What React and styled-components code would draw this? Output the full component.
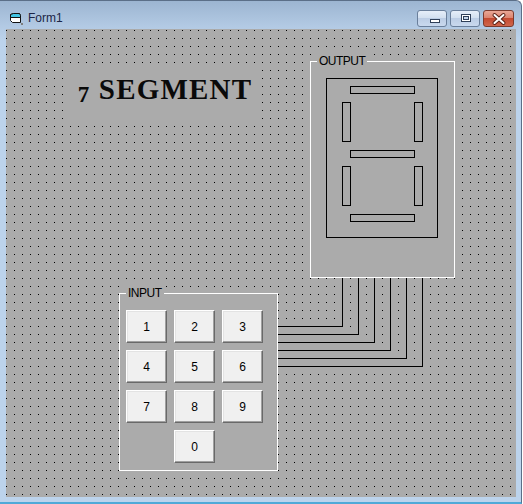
import React from 'react';
import styled, { createGlobalStyle, css } from 'styled-components';

const FORM_GRAY = '#ababab';

const GlobalStyle = createGlobalStyle`
    html, body {
        margin: 0;
        padding: 0;
        background: #ffffff;
    }
    body {
        font-family: "Liberation Sans", Arial, sans-serif;
    }
`;

// segments of the display, relative to the outer box (px)
const SEGMENTS = [
    { x: 24, y: 8, w: 64, h: 7 },
    { x: 16, y: 24, w: 8, h: 39 },
    { x: 88, y: 24, w: 8, h: 39 },
    { x: 24, y: 72, w: 64, h: 7 },
    { x: 16, y: 88, w: 8, h: 39 },
    { x: 88, y: 88, w: 8, h: 39 },
    { x: 24, y: 136, w: 64, h: 7 },
];

const KEYS = ['1', '2', '3', '4', '5', '6', '7', '8', '9', '0'];

const WIRES = [0, 1, 2, 3, 4, 5];

function App() {
    return (
        <>
            <GlobalStyle />
            <Window>
                <TitleBar>
                    <FormIcon width="14" height="13" viewBox="0 0 14 13">
                        <path d="M1.5 2.5 L4.5 1.5 L10.5 1.5 L11.5 3.5 L11.5 10.5 L3.5 10.5 L1.5 8.5 Z" fill="#ffffff" stroke="#111111" />
                        <path d="M1.5 2.5 L4.5 1.5 L10.5 1.5 L11.5 3.5 L11.5 5.5 L1.5 5.5 Z" fill="#41c4e4" stroke="#111111" />
                        <rect x="12" y="11" width="2" height="2" fill="#7f7f7f" />
                    </FormIcon>
                    <Title>Form1</Title>
                    <CaptionButtons>
                        <CaptionButton $w={30}>
                            <svg width="28" height="15" viewBox="0 0 28 15">
                                <rect x="12.5" y="8.5" width="9" height="3" fill="#ffffff" stroke="#2f3f58" />
                            </svg>
                        </CaptionButton>
                        <CaptionButton $w={30}>
                            <svg width="28" height="15" viewBox="0 0 28 15">
                                <rect x="10.5" y="3.5" width="9" height="7" fill="#ffffff" stroke="#2f3f58" />
                                <rect x="12.5" y="5.5" width="5" height="3" fill="#c5d5ea" stroke="#2f3f58" />
                            </svg>
                        </CaptionButton>
                        <CaptionButton $w={31} $close>
                            <svg width="29" height="15" viewBox="0 0 29 15">
                                <path d="M10.5 4 L19.5 12 M19.5 4 L10.5 12" stroke="#5a2217" strokeWidth="4" strokeLinecap="round" />
                                <path d="M10.5 4 L19.5 12 M19.5 4 L10.5 12" stroke="#ffffff" strokeWidth="2" strokeLinecap="round" />
                            </svg>
                        </CaptionButton>
                    </CaptionButtons>
                </TitleBar>

                <Client>
                    <TopRow>
                        <Heading>
                            <Seven>7</Seven> SEGMENT
                        </Heading>
                        <OutputFrame>
                            <Caption>OUTPUT</Caption>
                            <svg width="112" height="160" viewBox="0 0 112 160" style={{ display: 'block' }}>
                                <rect x="0.5" y="0.5" width="111" height="159" fill="none" stroke="#000" />
                                {SEGMENTS.map((s, i) => (
                                    <rect key={i} x={s.x + 0.5} y={s.y + 0.5} width={s.w} height={s.h} fill="none" stroke="#000" />
                                ))}
                            </svg>
                        </OutputFrame>
                    </TopRow>

                    <BottomRow>
                        <InputFrame>
                            <Caption>INPUT</Caption>
                            {KEYS.map((k) => (
                                <Key key={k} $zero={k === '0'}>{k}</Key>
                            ))}
                        </InputFrame>
                        <Wires width="145" height="89" viewBox="0 0 145 89">
                            {WIRES.map((i) => (
                                <polyline
                                    key={i}
                                    points={`0,${48.5 + 8 * i} ${64.5 + 16 * i},${48.5 + 8 * i} ${64.5 + 16 * i},0`}
                                    fill="none"
                                    stroke="#000"
                                />
                            ))}
                        </Wires>
                    </BottomRow>
                </Client>
            </Window>
        </>
    );
}

const Window = styled.div`
    width: 522px;
    height: 504px;
    box-sizing: border-box;
    border-top: 1px solid #5b6f88;
    border-right: 1px solid #5b6f88;
    border-bottom: 2px solid #4fa9d8;
    border-top-right-radius: 6px;
    background: linear-gradient(180deg, #9cb5d1 0px, #b3cae4 26px, #bcd3ec 40px, #bcd3ec 100%);
    display: flex;
    flex-direction: column;
`;

const TitleBar = styled.div`
    height: 28px;
    display: flex;
    align-items: flex-start;
    padding: 0 7px 0 9px;
`;

const FormIcon = styled.svg`
    display: block;
    margin-top: 11px;
`;

const Title = styled.span`
    margin: 10px 0 0 5px;
    font-size: 12px;
    line-height: 14px;
    color: #1b2546;
`;

const CaptionButtons = styled.div`
    margin: 9px 0 0 auto;
    display: flex;
    gap: 3px;
`;

const CaptionButton = styled.div`
    width: ${(p) => p.$w}px;
    height: 17px;
    box-sizing: border-box;
    border: 1px solid #6a7f9b;
    border-radius: 3px;
    background: linear-gradient(180deg, #e6eef9 0%, #d3e0f0 45%, #bccde5 50%, #c9d9ee 100%);
    svg {
        display: block;
    }
    ${(p) => p.$close && css`
        border-color: #7b3a2d;
        background: linear-gradient(180deg, #e9a796 0%, #dc8470 45%, #c44a31 50%, #d0664c 100%);
    `}
`;

const Client = styled.div`
    margin: 0 5px 0 6px;
    height: 468px;
    background-color: ${FORM_GRAY};
    background-image:
        linear-gradient(90deg, transparent 0 1px, ${FORM_GRAY} 1px),
        linear-gradient(180deg, ${FORM_GRAY} 0 1px, #000 1px 2px, ${FORM_GRAY} 2px);
    background-size: 8px 8px;
    display: flex;
    flex-direction: column;
`;

const TopRow = styled.div`
    height: 249px;
    display: flex;
    align-items: flex-start;
`;

const Heading = styled.div`
    margin: 35px 0 0 58px;
    width: 196px;
    height: 60px;
    box-sizing: border-box;
    padding: 10px 0 0 6px;
    background: ${FORM_GRAY};
    font-family: "Liberation Serif", "Times New Roman", serif;
    font-weight: bold;
    font-size: 29px;
    line-height: 30px;
    letter-spacing: 1.2px;
    text-align: center;
    color: #0a0a0a;
`;

const Seven = styled.span`
    font-size: 23px;
    vertical-align: -3px;
`;

const Frame = styled.div`
    position: relative;
    box-sizing: border-box;
    border: 1px solid #ffffff;
    background: ${FORM_GRAY};
`;

const OutputFrame = styled(Frame)`
    margin: 32px 0 0 50px;
    width: 145px;
    height: 217px;
    padding: 16px 0 0 15px;
`;

const Caption = styled.span`
    position: absolute;
    top: -8px;
    left: 6px;
    padding: 0 2px;
    background: ${FORM_GRAY};
    font-size: 12px;
    line-height: 14px;
    letter-spacing: -0.5px;
    color: #000;
`;

const BottomRow = styled.div`
    display: flex;
    align-items: flex-start;
    padding-left: 113px;
`;

const InputFrame = styled(Frame)`
    margin-top: 15px;
    width: 159px;
    height: 178px;
    padding: 16px 0 0 6px;
    display: grid;
    grid-template-columns: repeat(3, 41px);
    grid-auto-rows: 33px;
    gap: 7px;
    align-content: start;
`;

const Key = styled.div`
    grid-column: ${(p) => (p.$zero ? '2' : 'auto')};
    box-sizing: border-box;
    border: 1px solid;
    border-color: #ffffff #696969 #696969 #ffffff;
    box-shadow: inset -1px -1px 0 #a0a0a0, inset 1px 1px 0 #e3e3e3;
    background: #f0f0f0;
    display: flex;
    align-items: center;
    justify-content: center;
    font-size: 12px;
    color: #000;
`;

const Wires = styled.svg`
    display: block;
`;

export default App;
